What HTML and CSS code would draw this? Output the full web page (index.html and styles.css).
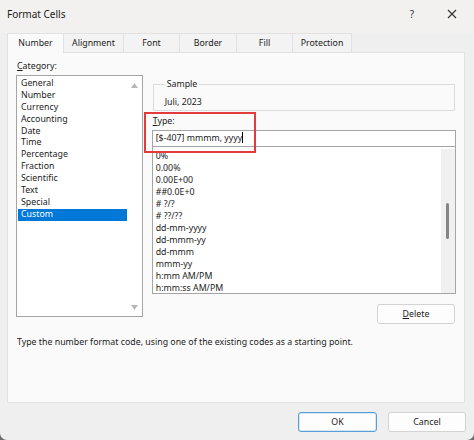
FILE: index.html
```html
<!DOCTYPE html>
<html>
<head>
<meta charset="utf-8">
<link rel="stylesheet" href="styles.css">
</head>
<body>
<div class="window">
  <div class="titlebar">
    <span class="title">Format Cells</span>
    <span class="help">?</span>
    <svg class="close" width="10" height="10" viewBox="0 0 10 10"><path d="M1 1L9 9M9 1L1 9" stroke="#333" stroke-width="1.1" fill="none"/></svg>
  </div>
  <div class="tabs">
    <div class="tab active t1">Number</div>
    <div class="tab t2">Alignment</div>
    <div class="tab t3">Font</div>
    <div class="tab t4">Border</div>
    <div class="tab t5">Fill</div>
    <div class="tab t6">Protection</div>
  </div>
  <div class="panel">
    <div class="cols">
      <div class="catcol">
        <div class="label cat-label"><u>C</u>ategory:</div>
        <div class="listbox">
          <div class="items">
            <div class="item">General</div>
            <div class="item">Number</div>
            <div class="item">Currency</div>
            <div class="item">Accounting</div>
            <div class="item">Date</div>
            <div class="item">Time</div>
            <div class="item">Percentage</div>
            <div class="item">Fraction</div>
            <div class="item">Scientific</div>
            <div class="item">Text</div>
            <div class="item">Special</div>
            <div class="item selected">Custom</div>
          </div>
          <div class="arrows">
            <svg width="7" height="5" viewBox="0 0 7 5"><path d="M0 5L3.5 0L7 5Z" fill="#b8b8b8"/></svg>
            <svg width="7" height="5" viewBox="0 0 7 5"><path d="M0 0L3.5 5L7 0Z" fill="#b8b8b8"/></svg>
          </div>
        </div>
      </div>
      <div class="rightcol">
        <fieldset class="sample">
          <legend>Sample</legend>
          <div class="sample-value">Juli, 2023</div>
        </fieldset>
        <div class="typearea">
          <div class="label type-label"><u>T</u>ype:</div>
          <div class="typeinput">[$-407] mmmm, yyyy<span class="caret"></span></div>
          <div class="highlight"></div>
        </div>
        <div class="fmtlist">
          <div class="fmtitems">
            <div class="fmt">0%</div>
            <div class="fmt">0.00%</div>
            <div class="fmt">0.00E+00</div>
            <div class="fmt">##0.0E+0</div>
            <div class="fmt"># ?/?</div>
            <div class="fmt"># ??/??</div>
            <div class="fmt">dd-mm-yyyy</div>
            <div class="fmt">dd-mmm-yy</div>
            <div class="fmt">dd-mmm</div>
            <div class="fmt">mmm-yy</div>
            <div class="fmt">h:mm AM/PM</div>
            <div class="fmt">h:mm:ss AM/PM</div>
          </div>
          <div class="scrolltrack"><div class="thumb"></div></div>
        </div>
        <div class="delrow"><button class="btn delete"><u>D</u>elete</button></div>
      </div>
    </div>
    <p class="desc">Type the number format code, using one of the existing codes as a starting point.</p>
  </div>
  <div class="footer">
    <button class="btn ok">OK</button>
    <button class="btn cancel">Cancel</button>
  </div>
</div>
</body>
</html>
```
FILE: styles.css
```css
* { box-sizing: border-box; }
html, body { margin: 0; padding: 0; }
body {
  width: 474px;
  height: 440px;
  background: #6b6b6b;
  font-family: "Noto Sans", "Open Sans", sans-serif;
  font-size: 8.8px;
  color: #1b1b1b;
  overflow: hidden;
}
.window {
  width: 474px;
  height: 440px;
  background: #efefef;
  border-radius: 0 0 7px 7px;
  display: flex;
  flex-direction: column;
}
.titlebar {
  height: 33px;
  background: #f3f1f0;
  display: flex;
  align-items: flex-start;
  padding: 8px 0 0 7px;
  font-size: 10px;
}
.title { flex: 1; line-height: 12px; }
.help { width: 12px; line-height: 12px; margin-right: 29px; text-align: center; color: #333; }
.close { margin: 1px 17px 0 0; }
.tabs {
  display: flex;
  padding-left: 7px;
  height: 19px;
  background: #efefef;
}
.tab {
  height: 19px;
  line-height: 19px;
  text-align: center;
  border: 1px solid #e2e2e2;
  border-bottom: none;
  border-left: none;
  background: #f3f3f3;
  color: #222;
}
.tab.active {
  background: #fafafa;
  border-left: 1px solid #e2e2e2;
  position: relative;
  z-index: 1;
  margin-bottom: -1px;
  height: 20px;
}
.t1 { width: 57px; }
.t2 { width: 60px; }
.t3 { width: 56px; }
.t4 { width: 57px; }
.t5 { width: 56px; }
.t6 { width: 59px; }
.panel {
  margin: 0 9px 0 7px;
  height: 351px;
  background: #fafafa;
  border: 1px solid #e2e2e2;
  padding: 7px 8px 0 8px;
}
.cols { display: flex; }
.catcol { width: 127px; }
.label { line-height: 13px; height: 13px; }
.cat-label { padding-left: 1px; }
.listbox {
  margin-top: 2px;
  height: 242px;
  background: #fff;
  border: 1px solid #a5a5a5;
  display: flex;
  padding: 2px 0 0 1px;
}
.items { width: 109px; }
.item {
  line-height: 11.9px;
  height: 11.9px;
  padding-left: 3px;
  white-space: nowrap;
}
.item.selected { background: #0078d7; color: #fff; }
.arrows {
  flex: 1;
  display: flex;
  flex-direction: column;
  justify-content: space-between;
  align-items: center;
  padding: 5px 0 6px 0;
}
.rightcol {
  width: 305px;
  margin-left: 9px;
}
.sample {
  margin: 18px 1px 0 1px;
  padding: 6px 6px 3px 11px;
  border: 1px solid #dcdcdc;
  min-width: 0;
  height: 33px;
}
.sample legend {
  padding: 0 2px;
  margin-left: 0;
  line-height: 12px;
  color: #222;
}
.sample-value { line-height: 12px; }
.typearea { position: relative; margin-top: 4px; }
.type-label { padding-left: 1px; line-height: 12px; height: 12px; margin-bottom: 3px; }
.typeinput {
  height: 17px;
  border: 1px solid #a5a5a5;
  background: #fff;
  line-height: 14px;
  padding-left: 3px;
  white-space: nowrap;
}
.caret {
  display: inline-block;
  width: 1px;
  height: 11px;
  background: #000;
  vertical-align: -2px;
}
.highlight {
  position: absolute;
  left: -8px;
  top: -3px;
  width: 112px;
  height: 41px;
  border: 2px solid #e33b3b;
  pointer-events: none;
}
.fmtlist {
  height: 147px;
  border: 1px solid #a5a5a5;
  border-top: none;
  background: #fff;
  display: flex;
  overflow: hidden;
}
.fmtitems { flex: 1; padding: 3px 0 0 3px; }
.fmt { line-height: 12px; height: 12px; white-space: nowrap; }
.scrolltrack {
  width: 14px;
  background: #f0f0f0;
  margin-top: 2px;
  position: relative;
}
.thumb {
  position: absolute;
  left: 5px;
  top: 54px;
  width: 3px;
  height: 36px;
  border-radius: 2px;
  background: #858585;
}
.delrow { display: flex; justify-content: flex-end; margin-top: 10px; padding-right: 1px; }
.btn {
  font-family: inherit;
  font-size: 8.8px;
  color: #1b1b1b;
  background: #fdfdfd;
  border: 1px solid #d3d3d3;
  border-radius: 3px;
  height: 20px;
  padding: 0;
}
.delete { width: 78px; }
.desc {
  margin: 12px 0 0 1px;
  line-height: 12px;
}
.footer {
  display: flex;
  justify-content: flex-end;
  padding: 9px 8px 0 0;
  gap: 11px;
}
.ok { width: 79px; border: 1px solid #5a9bd8; box-shadow: inset 0 0 0 1px #d6e8f7; }
.cancel { width: 78px; }
```
